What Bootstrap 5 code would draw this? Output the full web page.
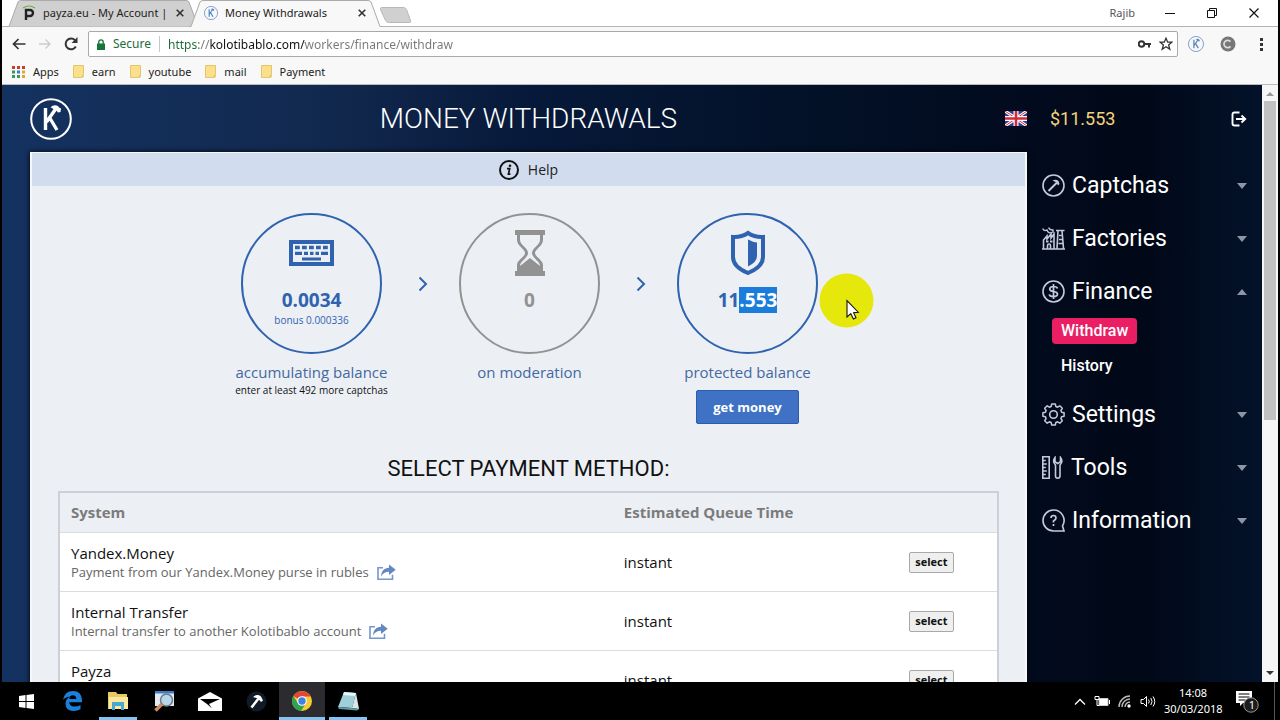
<!DOCTYPE html>
<html lang="en">
<head>
<meta charset="utf-8">
<meta name="viewport" content="width=device-width, initial-scale=1">
<title>Money Withdrawals</title>
<link rel="stylesheet" href="https://cdn.jsdelivr.net/npm/bootstrap@5.3.0/dist/css/bootstrap.min.css">
<script src="https://cdn.jsdelivr.net/npm/bootstrap@5.3.0/dist/js/bootstrap.bundle.min.js"></script>
<style>
  :root { --ui: "Noto Sans", "Open Sans", sans-serif; --copy: "Open Sans", sans-serif; --display: Roboto, sans-serif; --blue: #2f63b0; --steel: #44689f; }
  body { font-family: var(--copy); font-size: 15px; color: #111; background: #000; }
  svg { display: block; flex: none; }
  .desktop { height: 100vh; }
  .window { margin: 0 2px; min-height: 0; background: #fff; }
  .window button, .taskbar button { border: 0; background: none; padding: 0; color: inherit; }

  /* browser frame */
  .browser { font-family: var(--ui); font-size: 11px; line-height: 16px; color: #222; }
  .tabstrip { height: 27px; padding-left: 5px; border-bottom: 1px solid #b4b4b4; }
  .tab { position: relative; width: 193px; height: 27px; margin-right: -11px; }
  .tab.active { z-index: 1; }
  .tab > svg.shape { position: absolute; inset: 0; }
  .tab-body { position: relative; height: 27px; padding: 0 16px 0 15px; gap: 7px; }
  .tab-title { text-align: left; white-space: nowrap; }
  .caption-buttons { gap: 32px; padding-right: 19px; }
  .profile { color: #555; margin-right: -2px; }
  .toolbar { height: 34px; padding: 0 15px 0 10px; background: #f8f8f8; }
  .nav-buttons { gap: 13px; margin-right: 9px; }
  .omnibox { height: 26px; background: #fff; border: 1px solid #a9a9a9; border-radius: 2px; padding: 0 4px 0 8px; font-size: 12px; margin-right: 10px; }
  .secure { color: #1c6b3a; }
  .omnibox input { border: 0; outline: 0; padding: 0; font-family: var(--ui); font-size: 12px; height: 20px;
    background: linear-gradient(90deg, #1c6b3a 0 31px, #777 31px 42px, #111 42px 137px, #777 137px); -webkit-background-clip: text; background-clip: text; -webkit-text-fill-color: transparent; }
  .bookmarks { height: 24px; padding: 0 0 2px 10px; gap: 14px; background: #f8f8f8; border-bottom: 1px solid #bbb; }
  .bookmarks a { color: #222; text-decoration: none; gap: 8px; }

  /* site */
  .viewport { min-height: 0; }
  .site { min-width: 0; overflow: hidden; background: linear-gradient(90deg, #143260 0, #12294f 25%, #07193a 42%, #031229 62%, #020b1f 80%, #010817 90%, #03122a 100%); }
  .site-main { min-width: 0; padding-left: 28px; }
  .site-head { height: 67px; display: grid; grid-template-columns: 1fr auto 1fr; align-items: center; }
  .site-head h1 { font: 300 28px/36px var(--display); color: #fff; margin: 0; }
  .sheet { background: #ecf0f5; border: 2px solid #f6f8fc; border-top-width: 1px; box-shadow: 0 0 5px #000; height: 700px; }
  .help { height: 33px; background: #d1ddee; font-size: 14px; color: #222; text-decoration: none; gap: 9px; }
  .steps { padding: 27px 0 0 2px; }
  .step { position: relative; width: 158px; color: var(--steel); line-height: 20px; white-space: nowrap; }
  .ring { width: 141px; height: 141px; border: 2px solid var(--blue); border-radius: 50%; color: var(--blue); padding-top: 15px; }
  .ring.idle { border-color: #929292; color: #929292; }
  .ring .figure { font-size: 19px; font-weight: 700; line-height: 26px; margin-top: 11px; }
  .ring .bonus { font-size: 10px; line-height: 14px; }
  .picked { background: #1a7ddc; color: #fff; display: inline-block; }
  .hint { font-size: 10px; line-height: 16px; color: #111; }
  .next { width: 60px; height: 141px; padding-left: 4px; }
  .step .get { width: 103px; height: 34px; margin-top: 8px; background: #3f72c5; border: 1px solid #2b5cae; border-radius: 2px; color: #fff; font-size: 13px; font-weight: 700; padding: 0; line-height: 20px; }
  .pointer { position: absolute; left: 150px; top: 60px; }
  .method-title { font: 400 22px/30px var(--display); margin: 30px 0 7px; color: #111; }
  .methods { margin: 0 26px; border: 2px solid #cdd1d7; }
  .methods table { table-layout: fixed; margin: 0; --bs-table-bg: #fff; }
  .methods th { height: 39px; font-weight: 700; color: #7b7b7b; background: #ecf0f5; vertical-align: middle; }
  .methods th, .methods td { padding: 0 11px; border-bottom: 1px solid #dcdcdc; line-height: 20px; }
  .methods td { height: 59px; color: #111; }
  .methods .note { font-size: 13px; line-height: 18px; height: 18px; color: #666; gap: 8px; }
  .methods .pick { width: 45px; height: 21px; border: 1px solid #a9a9a9; border-radius: 2px; background: #efefef; font-size: 11px; font-weight: 700; line-height: 14px; }
  .c1 { width: 59%; } .c2 { width: 27%; } .c3 { width: 14%; }

  /* side menu */
  .side { width: 235px; flex: none; padding: 0 15px; font-family: var(--display); color: #fff; }
  .side-head { height: 67px; padding: 0 0 0 8px; margin-bottom: 7px; }
  .money { font-size: 18px; color: #f3d37c; }
  .side .entry { height: 53px; font-size: 23px; line-height: 30px; width: 100%; gap: 7px; color: #fff; }
  .side .entry svg { color: #c3cad9; }
  .sub { height: 70px; padding-left: 10px; gap: 9px; }
  .sub a { height: 26px; line-height: 26px; padding: 0 9px; font-size: 16px; font-weight: 500; color: #fff; text-decoration: none; border-radius: 4px; }
  .sub a.on { background: #e91e63; }
  .scroller { width: 16px; background: #f6f6f6; padding: 3px 2px; }
  .thumb { height: 319px; background: #c1c1c1; margin-top: 1px; }

  /* taskbar */
  .taskbar { height: 38px; padding: 0 5px 0 3px; background: #000; color: #fff; }
  .taskbar .app { width: 46px; height: 38px; display: flex; align-items: center; justify-content: center; border-bottom: 3px solid transparent; padding-top: 3px; }
  .taskbar .open { border-bottom-color: #84c4f2; margin: 0 4px; width: 38px; }
  .taskbar .current { border-bottom-color: #84c4f2; background: #2c2c30; }
  .tray { gap: 8px; }
  .clock { font: 11px/16px var(--ui); width: 58px; white-space: nowrap; }
  .notices { margin: 0 7px 0 5px; }
  .peek { width: 1px; height: 38px; background: #555; }
</style>
</head>
<body>
<svg width="0" height="0" class="position-absolute" aria-hidden="true">
  <symbol id="kmark" viewBox="0 0 42 42"><circle cx="21" cy="21" r="19.8" fill="none" stroke="currentColor" stroke-width="2"/><path d="M15.500 10v22M16.500 24L26 10.500M19.500 19.500L27 32" fill="none" stroke="currentColor" stroke-width="3.400"/><path d="M20.500 9.200q3.500-3.200 7.500-1.200l1 1.500 2 1-.5 3.500-2.500.5-2-2.500-2.500-1z" fill="currentColor"/></symbol>
  <symbol id="folder" viewBox="0 0 11 13"><path d="M.5.500h10v9l-2 3H.5z" fill="#fbe08c" stroke="#e4c568"/><path d="M10.500 9v3.500h-2z" fill="#dcb54d"/></symbol>
  <symbol id="close" viewBox="0 0 8 8"><path d="M.7.700l6.600 6.600M7.300.7L.7 7.300" stroke="#333" stroke-width="1.600"/></symbol>
  <symbol id="share" viewBox="0 0 19 16"><path d="M6 3.700H1v11.500h14.500v-4.500" fill="none" stroke="#7696cd" stroke-width="1.600"/><path d="M4 12.500c.3-6 3.500-8.500 8-8.800V.5l6.700 5.300L12 11V7.800c-4 0-6 1.500-8 4.700z" fill="#6387c5"/></symbol>
  <symbol id="down" viewBox="0 0 10 6"><path d="M0 0h10L5 6z" fill="#8d96a6"/></symbol>
</svg>

<div class="desktop d-flex flex-column overflow-hidden">
  <div class="window flex-grow-1 d-flex flex-column">
    <header class="browser flex-shrink-0">
      <div class="tabstrip d-flex align-items-center">
        <div class="tab">
          <svg class="shape" width="193" height="27"><path d="M0 26.500h2L11 2q1-1.500 3-1.500h165q2 0 3 1.500l9 24.500h2" fill="#d0d0d0" stroke="#aaa"/></svg>
          <div class="tab-body d-flex align-items-center">
            <svg width="14" height="16" viewBox="0 0 14 16"><path d="M4 15V5h4a3 3 0 0 1 0 6H4" fill="none" stroke="#222" stroke-width="2.400"/><path d="M1 3q6-4 12 0" fill="none" stroke="#69b33f" stroke-width="1.200"/></svg>
            <button type="button" class="tab-title">payza.eu - My Account |</button>
            <button type="button" class="ms-auto" aria-label="Close tab"><svg width="8" height="8"><use href="#close"/></svg></button>
          </div>
        </div>
        <div class="tab active">
          <svg class="shape" width="193" height="27"><path d="M0 26.500h2L11 2q1-1.500 3-1.500h165q2 0 3 1.500l9 24.500h2V27H0z" fill="#f8f8f8"/><path d="M0 26.500h2L11 2q1-1.500 3-1.500h165q2 0 3 1.500l9 24.500h2" fill="none" stroke="#aaa"/></svg>
          <div class="tab-body d-flex align-items-center">
            <svg width="14" height="14" color="#4b7fc4"><use href="#kmark"/></svg>
            <button type="button" class="tab-title">Money Withdrawals</button>
            <button type="button" class="ms-auto" aria-label="Close tab"><svg width="8" height="8"><use href="#close"/></svg></button>
          </div>
        </div>
        <button type="button" class="ms-2 mt-1" aria-label="New tab"><svg width="33" height="16"><path d="M2.500.500h22q2 0 3 2l4 11q1 2-1 2h-21q-2 0-3-2l-5-11q-.5-2 1-2z" fill="#d0d0d0" stroke="#b8b8b8"/></svg></button>
        <div class="caption-buttons ms-auto d-flex align-items-center">
          <span class="profile">Rajib</span>
          <button type="button" aria-label="Minimise"><svg width="10" height="10"><path d="M0 5.500h10" stroke="#111"/></svg></button>
          <button type="button" aria-label="Restore"><svg width="10" height="10"><path d="M.5 2.500h7v7h-7zM2.500 2.500v-2h7v7h-2" fill="none" stroke="#111"/></svg></button>
          <button type="button" aria-label="Close"><svg width="10" height="10"><path d="M.5.500l9 9M9.500.500l-9 9" stroke="#111" stroke-width="1.200"/></svg></button>
        </div>
      </div>
      <div class="toolbar d-flex align-items-center">
        <div class="nav-buttons d-flex align-items-center">
          <button type="button" aria-label="Back"><svg width="14" height="12"><path d="M13.500 6H1.500M6.500 1L1.500 6l5 5" fill="none" stroke="#333" stroke-width="1.700"/></svg></button>
          <button type="button" aria-label="Forward"><svg width="12" height="12"><path d="M0 6h11M6.500 1.500L11 6l-4.500 4.500" fill="none" stroke="#ccc" stroke-width="1.400"/></svg></button>
          <button type="button" aria-label="Reload"><svg width="15" height="14" viewBox="0 0 15 14"><path d="M11.800 9.500A5.400 5.400 0 1 1 11 3.200" fill="none" stroke="#333" stroke-width="2"/><path d="M13.500 0v6H7.600z" fill="#333"/></svg></button>
        </div>
        <div class="omnibox flex-grow-1 d-flex align-items-center">
          <svg width="8" height="11"><path d="M0 4.500h8V11H0z" fill="#17753a"/><path d="M1.800 5V3a2.200 2.200 0 0 1 4.400 0v2" fill="none" stroke="#17753a" stroke-width="1.300"/></svg>
          <label class="secure ms-2" for="address">Secure</label>
          <span class="vr mx-2 my-1"></span>
          <input id="address" class="flex-grow-1" type="text" value="https://kolotibablo.com/workers/finance/withdraw">
          <svg width="13" height="8" viewBox="0 0 13 8" class="me-2"><path d="M3.500 1.200a2.800 2.800 0 1 0 0 5.600 2.800 2.800 0 0 0 0-5.600zM6 4h7M11 4v3.500" fill="none" stroke="#333" stroke-width="2"/></svg>
          <svg width="14" height="14" viewBox="0 0 14 14"><path d="M7 1.200l1.700 4h4.200L9.600 8l1.200 4.300L7 9.800l-3.800 2.500L4.400 8 1.100 5.200h4.200z" fill="none" stroke="#333" stroke-width="1.300"/></svg>
        </div>
        <svg width="16" height="16" color="#5d88c0"><use href="#kmark"/></svg>
        <svg class="ms-3" width="16" height="16"><circle cx="8" cy="8" r="7.500" fill="#777"/><path d="M10.500 5.600a3.700 3.700 0 1 0 0 4.800" fill="none" stroke="#ddd" stroke-width="1.700"/></svg>
        <svg class="ms-4" width="3" height="13"><path d="M0 0h3v3H0zM0 5h3v3H0zM0 10h3v3H0z" fill="#333"/></svg>
      </div>
      <nav class="bookmarks d-flex align-items-center">
        <a href="#" class="d-flex align-items-center"><svg width="13" height="12"><path d="M0 1.500h13" stroke="#c3402f" stroke-width="3" stroke-dasharray="3 2"/><path d="M0 6h3" stroke="#3a9b58" stroke-width="3"/><path d="M5 6h3" stroke="#3b7ed0" stroke-width="3"/><path d="M10 6h3" stroke="#e2a72e" stroke-width="3"/><path d="M0 10.500h8" stroke="#3a9b58" stroke-width="3" stroke-dasharray="3 2"/><path d="M10 10.500h3" stroke="#e2a72e" stroke-width="3"/></svg>Apps</a>
        <a href="#" class="d-flex align-items-center"><svg width="11" height="13"><use href="#folder"/></svg>earn</a>
        <a href="#" class="d-flex align-items-center"><svg width="11" height="13"><use href="#folder"/></svg>youtube</a>
        <a href="#" class="d-flex align-items-center"><svg width="11" height="13"><use href="#folder"/></svg>mail</a>
        <a href="#" class="d-flex align-items-center"><svg width="11" height="13"><use href="#folder"/></svg>Payment</a>
      </nav>
    </header>

    <div class="viewport flex-grow-1 d-flex overflow-hidden">
      <div class="site flex-grow-1 d-flex">
        <main class="site-main flex-grow-1">
          <div class="site-head">
            <a href="#" class="text-white" aria-label="Home"><svg width="42" height="42"><use href="#kmark"/></svg></a>
            <h1>MONEY WITHDRAWALS</h1>
            <button type="button" class="ms-auto" aria-label="Language"><svg width="22" height="15" viewBox="0 0 22 15"><path d="M0 0h22v15H0z" fill="#2b3f8c"/><path d="M0 0l22 15M22 0L0 15" stroke="#fff" stroke-width="3"/><path d="M0 0l22 15M22 0L0 15" stroke="#d4283c" stroke-width="1"/><path d="M11 0v15M0 7.500h22" stroke="#fff" stroke-width="5"/><path d="M11 0v15M0 7.500h22" stroke="#d4283c" stroke-width="2.600"/></svg></button>
          </div>
          <div class="sheet">
            <a href="#" class="help d-flex align-items-center justify-content-center"><svg width="20" height="20"><circle cx="10" cy="10" r="9" fill="none" stroke="#111" stroke-width="2"/><circle cx="11" cy="5.800" r="1.300" fill="#111"/><path d="M8 8.700h2.700l-1.300 5.500h2" fill="none" stroke="#111" stroke-width="1.700"/></svg>Help</a>
            <section class="steps d-flex justify-content-center text-center">
              <div class="step">
                <div class="ring mx-auto mb-2">
                  <svg class="mx-auto" width="45" height="46" viewBox="0 0 45 46"><path fill-rule="evenodd" d="M0 10h45v26H0zM4 14v18h37V14z" fill="currentColor"/><path d="M6 17.500h33" stroke="currentColor" stroke-width="3.400" stroke-dasharray="4.800 2.200"/><path d="M6 23.300h7M15 23.300h4M21 23.300h3.500M26.500 23.300h3.500M32 23.300h7M13 29h19" stroke="currentColor" stroke-width="3.200"/></svg>
                  <div class="figure">0.0034</div>
                  <div class="bonus">bonus 0.000336</div>
                </div>
                <div>accumulating balance</div>
                <div class="hint">enter at least 492 more captchas</div>
              </div>
              <div class="next d-flex align-items-center justify-content-center"><svg width="10" height="16"><path d="M1.500 1.500L8 8l-6.500 6.500" fill="none" stroke="#2f63b0" stroke-width="2"/></svg></div>
              <div class="step">
                <div class="ring idle mx-auto mb-2">
                  <svg class="mx-auto" width="30" height="46" viewBox="0 0 30 46"><path fill-rule="evenodd" d="M0 0h30v5h-2v5c0 6-8 9-8 13s8 7 8 12v6h2v5H0v-5h2v-6c0-5 8-8 8-12S2 16 2 10V5H0zM5 5v5c0 5 8 8 8 13S5 31 5 36l10-8 10 8c0-5-8-8-8-13s8-8 8-13V5z" fill="currentColor"/></svg>
                  <div class="figure">0</div>
                </div>
                <div>on moderation</div>
              </div>
              <div class="next d-flex align-items-center justify-content-center"><svg width="10" height="16"><path d="M1.500 1.500L8 8l-6.500 6.500" fill="none" stroke="#2f63b0" stroke-width="2"/></svg></div>
              <div class="step">
                <div class="ring mx-auto mb-2">
                  <svg class="mx-auto" width="34" height="46" viewBox="0 0 34 46"><path d="M17 3q7 4.500 15 4v20q0 10-15 16Q2 37 2 27V7q8 .5 15-4z" fill="none" stroke="currentColor" stroke-width="4"/><path d="M17 9.500q4.500 2.500 9 3V26q0 6-9 10.500z" fill="currentColor"/></svg>
                  <div class="figure">11<span class="picked">.553</span></div>
                </div>
                <div>protected balance</div>
                <button type="button" class="btn get">get money</button>
                <svg class="pointer" width="55" height="55"><circle cx="27.500" cy="27.500" r="27" fill="#e6e80c"/><path d="M28 27.500v16.500l3.800-3.300 2.600 5.300 2.600-1.200-2.400-5.100 4.700-.5z" fill="#fff" stroke="#111" stroke-width="1.100"/></svg>
              </div>
            </section>
            <h2 class="method-title text-center">SELECT PAYMENT METHOD:</h2>
            <div class="methods">
              <table class="table align-middle">
                <thead><tr><th class="c1">System</th><th class="c2">Estimated Queue Time</th><th class="c3"></th></tr></thead>
                <tbody>
                  <tr><td>Yandex.Money<div class="note d-flex align-items-center">Payment from our Yandex.Money purse in rubles <svg width="19" height="16"><use href="#share"/></svg></div></td><td>instant</td><td class="text-center"><button type="button" class="pick">select</button></td></tr>
                  <tr><td>Internal Transfer<div class="note d-flex align-items-center">Internal transfer to another Kolotibablo account <svg width="19" height="16"><use href="#share"/></svg></div></td><td>instant</td><td class="text-center"><button type="button" class="pick">select</button></td></tr>
                  <tr><td>Payza<div class="note"></div></td><td>instant</td><td class="text-center"><button type="button" class="pick">select</button></td></tr>
                </tbody>
              </table>
            </div>
          </div>
        </main>
        <aside class="side">
          <div class="side-head d-flex align-items-center justify-content-between"><span class="money">$11.553</span>
            <button type="button" aria-label="Log out"><svg width="16" height="16"><path d="M8.500 1.500h-5q-2 0-2 2v9q0 2 2 2h5M5 8h9M10.500 4.500L14.200 8l-3.700 3.500" fill="none" stroke="#fff" stroke-width="1.900"/></svg></button></div>
          <button type="button" class="entry d-flex align-items-center"><svg width="23" height="23"><circle cx="11.500" cy="11.500" r="10.500" fill="none" stroke="currentColor" stroke-width="1.600"/><path d="M6.500 17L15 8.500" stroke="currentColor" stroke-width="2"/><path d="M10.500 6.500q3.500-1.500 6 .5l1 3-1.500 1.500-1.500-3z" fill="currentColor"/></svg>Captchas<svg class="ms-auto" width="10" height="6"><use href="#down"/></svg></button>
          <button type="button" class="entry d-flex align-items-center"><svg width="23" height="23"><path d="M0 22h23M1.500 21.500V13L5 9v3l4-5v4l3-4v14.500M15 21.500L16 3.500h4L21.500 21.500M14 3.500h8.500M5.500 21.500v-3q0-1.500 1.500-1.500t1.500 1.500v3M17 8.500h2.500M17 12.500h3M16.500 16.500h4" fill="none" stroke="currentColor" stroke-width="1.600"/><path d="M4 14.500h2.500M8 14.500h2.500" stroke="currentColor" stroke-width="2"/><path d="M.7 1.500q1.500 3 4.300 1.500 1.500 4 5 2.500M6.500.7Q8 3.500 11 3v3" fill="none" stroke="currentColor" stroke-width="1.400"/></svg>Factories<svg class="ms-auto" width="10" height="6"><use href="#down"/></svg></button>
          <button type="button" class="entry d-flex align-items-center"><svg width="23" height="23"><circle cx="11.500" cy="11.500" r="10.500" fill="none" stroke="currentColor" stroke-width="1.600"/><path d="M15.500 8.500Q15 6.500 11.500 6.500T7.700 9q0 2 3.800 2.500T15.500 14q0 2.500-4 2.500T7.300 14.300M11.500 4v15" fill="none" stroke="currentColor" stroke-width="1.700"/></svg>Finance<svg class="ms-auto" width="10" height="6"><path d="M0 6h10L5 0z" fill="#8d96a6"/></svg></button>
          <div class="sub d-flex flex-column align-items-start"><a href="#" class="on">Withdraw</a><a href="#">History</a></div>
          <button type="button" class="entry d-flex align-items-center"><svg width="23" height="23" viewBox="0 0 23 23"><circle cx="11.500" cy="11.500" r="3.800" fill="none" stroke="currentColor" stroke-width="1.600"/><path d="M9.700 1h3.600l.6 2.500 1.700.7 2.200-1.400 2.500 2.500-1.400 2.200.7 1.700 2.500.6v3.400l-2.500.6-.7 1.700 1.400 2.200-2.500 2.500-2.200-1.400-1.700.7-.6 2.500H9.700l-.6-2.500-1.700-.7-2.200 1.400-2.500-2.500 1.400-2.200-.7-1.700L.9 13.200V9.800l2.500-.6.7-1.700-1.400-2.200 2.500-2.500 2.200 1.400 1.700-.7z" fill="none" stroke="currentColor" stroke-width="1.500" stroke-linejoin="round"/></svg>Settings<svg class="ms-auto" width="10" height="6"><use href="#down"/></svg></button>
          <button type="button" class="entry d-flex align-items-center"><svg width="22" height="23"><path d="M.8.800h6.400v21.400H.8zM.8 4.500h3M.8 8h4M.8 11.500h3M.8 15h4M.8 18.500h3M13 1.500Q10 5.500 13.500 9v11q0 2.200 2.200 2.200T18 20V9q3.500-3.500.5-7.500v4.300L15.700 7.500 13 5.800z" fill="none" stroke="currentColor" stroke-width="1.600"/></svg>Tools<svg class="ms-auto" width="10" height="6"><use href="#down"/></svg></button>
          <button type="button" class="entry d-flex align-items-center"><svg width="23" height="23"><path d="M11.500 1a10.500 10.500 0 0 0 0 21H22l-1.500-5A10.500 10.500 0 0 0 11.500 1z" fill="none" stroke="currentColor" stroke-width="1.600"/><path d="M9 9q0-2.500 2.500-2.500T14 9q0 1.500-2.500 3v1.500M11.500 15v2" fill="none" stroke="currentColor" stroke-width="1.700"/></svg>Information<svg class="ms-auto" width="10" height="6"><use href="#down"/></svg></button>
        </aside>
      </div>
      <div class="scroller d-flex flex-column flex-shrink-0">
        <svg class="mx-auto my-1" width="8" height="4"><path d="M0 4h8L4 0z" fill="#999"/></svg>
        <div class="thumb"></div>
        <svg class="mx-auto mt-auto mb-1" width="8" height="4"><path d="M0 0h8L4 4z" fill="#333"/></svg>
      </div>
    </div>
  </div>

  <footer class="taskbar d-flex align-items-center flex-shrink-0">
    <button type="button" class="app" aria-label="Start"><svg width="15" height="15"><path d="M0 2l6.500-1v6H0zM7.500.900L15 0v7H7.500zM0 8h6.500v6L0 13zM7.500 8H15v7l-7.500-1z" fill="#fff"/></svg></button>
    <button type="button" class="app" aria-label="Edge"><svg width="19" height="20" viewBox="0 0 19 20"><path d="M0 9Q1.500 0 10 0q8.500 0 9 9v2.300H6.200q.3 4.200 5.300 4.200 3.500 0 6-1.600v4.300q-3 1.800-7 1.800-8-.3-8-7.500Q2.500 8 7 5.500q-5 .5-7 3.500zm6.300-1h7q0-3.800-3.400-3.800T6.300 8z" fill="#1b7fdc"/></svg></button>
    <button type="button" class="app open" aria-label="File Explorer"><svg width="20" height="18"><path d="M0 0h8l1.500 2H19v15H0z" fill="#e9c964"/><path d="M1 5h19v12H1z" fill="#fbe9a0"/><path d="M4 10h12v8h-3v-4H7v4H4z" fill="#4aa7cf"/></svg></button>
    <button type="button" class="app" aria-label="Magnifier"><svg width="21" height="22"><path d="M1 1h19v15H1z" fill="#e3eaf2"/><path d="M1 1h19v2.500H1z" fill="#3c7dc8"/><circle cx="12.500" cy="10" r="6" fill="#b6d6ea" stroke="#6b7b88" stroke-width="1.500"/><path d="M8 14l-6.500 6.500" stroke="#c88d66" stroke-width="3.500"/></svg></button>
    <button type="button" class="app" aria-label="Mail"><svg width="24" height="19"><path d="M0 6.500L12 0l12 6.500V19H0z" fill="#fff"/><path d="M2 7h20l-11 5 3 4.500L9 12z" fill="#000"/></svg></button>
    <button type="button" class="app" aria-label="Captcha bot"><svg width="21" height="21"><circle cx="10.500" cy="10.500" r="10" fill="#111a27"/><path d="M5.500 16.500l7-9" stroke="#fff" stroke-width="2.500"/><path d="M7 6q4-3.500 8-.5l2 4-2 1.500-3-3.500z" fill="#fff"/></svg></button>
    <button type="button" class="app current" aria-label="Chrome"><svg width="20" height="20" viewBox="0 0 20 20"><circle cx="10" cy="10" r="10" fill="#f7cb34"/><path d="M10 10L1.300 5A10 10 0 0 1 18.700 5.500H10z" fill="#e04738"/><path d="M1.300 5a10 10 0 0 0 7.900 15l4.600-7.800L6 12.200z" fill="#2fa351"/><circle cx="10" cy="10" r="4.800" fill="#fff"/><circle cx="10" cy="10" r="3.700" fill="#437fe8"/></svg></button>
    <button type="button" class="app open" aria-label="Notepad"><svg width="21" height="20"><path d="M6 1l12 1-4 15L0 16z" fill="#9fd0d8"/><path d="M18 2l3 16-7-1z" fill="#d8e8ea"/><path d="M6 1l12 1-1 3L5 4z" fill="#e9f6f7"/><path d="M0 16l14 1 7 1-2 1.500L1 18z" fill="#5d9aa6"/></svg></button>
    <div class="tray ms-auto d-flex align-items-center">
      <svg width="12" height="7"><path d="M1 6.500L6 1.500l5 5" fill="none" stroke="#fff" stroke-width="1.300"/></svg>
      <svg width="16" height="12"><path d="M5 3.500h9v7H5z" fill="#fff" stroke="#ccc"/><path d="M15.500 5v4M1 1.500h4v3H1zM3 4.500v6h2" fill="none" stroke="#fff"/></svg>
      <svg width="14" height="13"><path d="M1 12A11 11 0 0 1 12 1M4 12a8 8 0 0 1 8-8M7 12a5 5 0 0 1 5-5" fill="none" stroke="#bbb" stroke-width="1.400"/><circle cx="11" cy="11" r="1.700" fill="#fff"/></svg>
      <svg width="16" height="13"><path d="M1 4.500h2.500L6.500 1.500v10l-3-3H1z" fill="none" stroke="#fff"/><path d="M8.500 4.500q1.500 2 0 4M10.800 3q2.500 3.500 0 7M13 1.500q3.500 5 0 10" fill="none" stroke="#fff"/></svg>
      <div class="clock text-center">14:08<br>30/03/2018</div>
      <div class="notices position-relative"><svg width="24" height="24"><path d="M1 2h16v12H8l-3 3v-3H1z" fill="#fff"/><path d="M3.500 5h11M3.500 8h11M3.500 11h7" stroke="#000"/><circle cx="16" cy="16" r="7.200" fill="#1c1c1c" stroke="#999"/></svg><span class="position-absolute bottom-0 end-0 clock w-auto pe-1">1</span></div>
      <span class="peek"></span>
    </div>
  </footer>
</div>
</body>
</html>
